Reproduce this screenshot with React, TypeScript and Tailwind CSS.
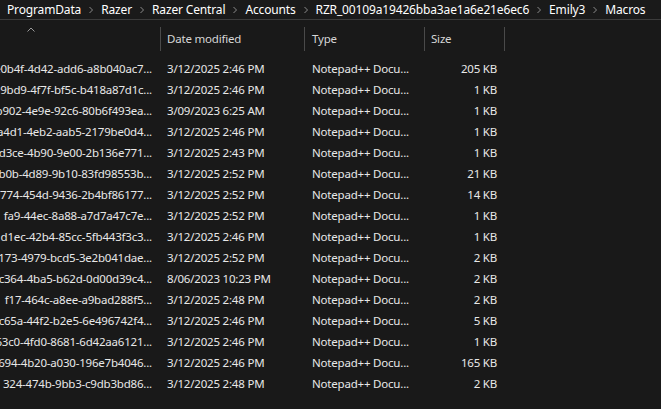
const CRUMBS = ['ProgramData', 'Razer', 'Razer Central', 'Accounts', 'RZR_00109a19426bba3ae1a6e21e6ec6', 'Emily3', 'Macros'];

const ROWS: { name: string; date: string; size: string }[] = [
  { name: 'e0b4f-4d42-add6-a8b040ac7...', date: '3/12/2025 2:46 PM', size: '205 KB' },
  { name: 'a9bd9-4f7f-bf5c-b418a87d1c...', date: '3/12/2025 2:46 PM', size: '1 KB' },
  { name: 'bb902-4e9e-92c6-80b6f493ea...', date: '3/09/2023 6:25 AM', size: '1 KB' },
  { name: 'ba4d1-4eb2-aab5-2179be0d4...', date: '3/12/2025 2:46 PM', size: '1 KB' },
  { name: '5d3ce-4b90-9e00-2b136e771...', date: '3/12/2025 2:43 PM', size: '1 KB' },
  { name: 'eb0b-4d89-9b10-83fd98553b...', date: '3/12/2025 2:52 PM', size: '21 KB' },
  { name: '7774-454d-9436-2b4bf86177...', date: '3/12/2025 2:52 PM', size: '14 KB' },
  { name: 'fa9-44ec-8a88-a7d7a47c7e...', date: '3/12/2025 2:52 PM', size: '1 KB' },
  { name: 'd1ec-42b4-85cc-5fb443f3c3...', date: '3/12/2025 2:46 PM', size: '1 KB' },
  { name: '8173-4979-bcd5-3e2b041dae...', date: '3/12/2025 2:52 PM', size: '2 KB' },
  { name: 'ec364-4ba5-b62d-0d00d39c4...', date: '8/06/2023 10:23 PM', size: '2 KB' },
  { name: 'f17-464c-a8ee-a9bad288f5...', date: '3/12/2025 2:48 PM', size: '2 KB' },
  { name: 'c65a-44f2-b2e5-6e496742f4...', date: '3/12/2025 2:46 PM', size: '5 KB' },
  { name: '563c0-4fd0-8681-6d42aa6121...', date: '3/12/2025 2:46 PM', size: '1 KB' },
  { name: '6694-4b20-a030-196e7b4046...', date: '3/12/2025 2:46 PM', size: '165 KB' },
  { name: '324-474b-9bb3-c9db3bd86...', date: '3/12/2025 2:48 PM', size: '2 KB' },
];

function Chevron() {
  return (
    <svg width="6" height="8" viewBox="0 0 6 8" className="mx-[6px] shrink-0">
      <path d="M1.5 1 L4.5 4 L1.5 7" fill="none" stroke="#8a8a8a" strokeWidth="1" />
    </svg>
  );
}

export default function App() {
  return (
    <div
      className="h-[409px] w-[661px] overflow-hidden bg-[#191919] text-[11.5px] tracking-[-0.2px] text-[#e8e8e8]"
      style={{ fontFamily: '"Segoe UI", "Noto Sans", sans-serif' }}
    >
      {/* Breadcrumb bar */}
      <div className="flex h-[20px] items-center whitespace-nowrap border-b border-[#3c3c3c] bg-[#1a1a1a] pl-[6px] text-[12px] tracking-[-0.15px] text-white">
        {CRUMBS.map((c, i) => (
          <span key={c} className="flex items-center">
            {i > 0 && <Chevron />}
            <span className="px-[1px]">{c}</span>
          </span>
        ))}
      </div>

      {/* Column headers */}
      <div className="relative flex h-[38px] items-center text-[#d6d6d6]">
        <svg width="8" height="5" viewBox="0 0 8 5" className="absolute left-[27px] top-[7px]">
          <path d="M0.5 4.5 L4 1 L7.5 4.5" fill="none" stroke="#9a9a9a" strokeWidth="1" />
        </svg>
        <div className="h-[24px] w-[161px] border-r border-[#4a4a4a]" />
        <div className="flex h-[24px] w-[144px] items-center border-r border-[#4a4a4a] pl-[6px]">Date modified</div>
        <div className="flex h-[24px] w-[120px] items-center border-r border-[#4a4a4a] pl-[7px]">Type</div>
        <div className="flex h-[24px] w-[80px] items-center border-r border-[#4a4a4a] pl-[6px]">Size</div>
      </div>

      {/* File rows */}
      <div className="flex flex-col">
        {ROWS.map((r, i) => (
          <div key={i} className="flex h-[21px] items-center whitespace-nowrap">
            <div className="flex w-[161px] justify-end overflow-hidden pr-[9px]">
              <span className="shrink-0">{r.name}</span>
            </div>
            <div className="w-[144px] pl-[6px]">{r.date}</div>
            <div className="w-[120px] pl-[7px]">Notepad++ Docu...</div>
            <div className="w-[80px] pr-[8px] text-right">{r.size}</div>
          </div>
        ))}
      </div>
    </div>
  );
}
